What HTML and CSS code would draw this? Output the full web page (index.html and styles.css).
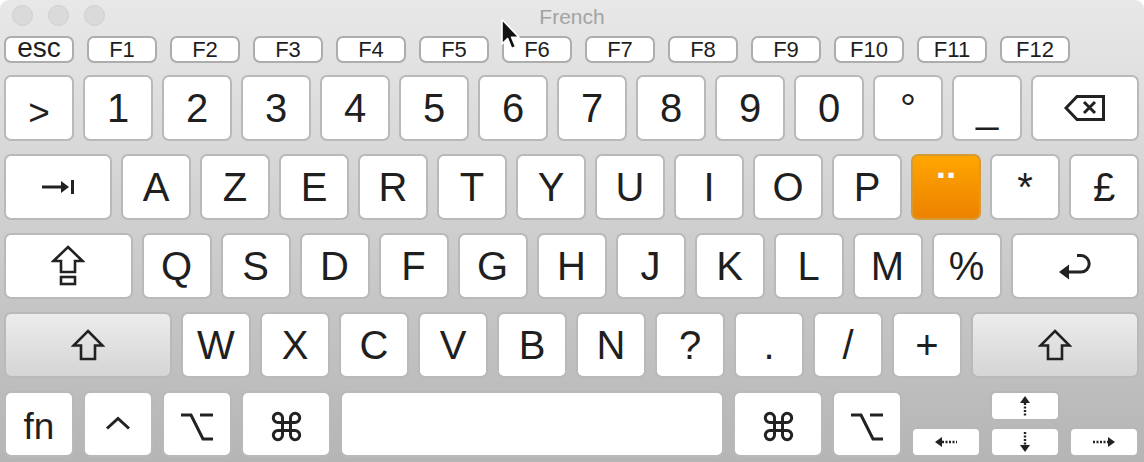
FILE: index.html
```html
<!DOCTYPE html>
<html>
<head>
<meta charset="utf-8">
<title>Keyboard Viewer</title>
<link rel="stylesheet" href="styles.css">
</head>
<body>
<div class="window">
  <div class="titlebar">
    <div class="lights"><span class="light"></span><span class="light"></span><span class="light"></span></div>
    <div class="title">French</div>
    <div></div>
  </div>

  <div class="fnrow">
    <div class="fkey esc">esc</div>
    <div class="fkey">F1</div><div class="fkey">F2</div><div class="fkey">F3</div><div class="fkey">F4</div>
    <div class="fkey">F5</div><div class="fkey">F6</div><div class="fkey">F7</div><div class="fkey">F8</div>
    <div class="fkey">F9</div><div class="fkey">F10</div><div class="fkey">F11</div><div class="fkey">F12</div>
  </div>

  <div class="rows">
    <div class="row">
      <div class="key low">&gt;</div>
      <div class="key">1</div><div class="key">2</div><div class="key">3</div><div class="key">4</div>
      <div class="key">5</div><div class="key">6</div><div class="key">7</div><div class="key">8</div>
      <div class="key">9</div><div class="key">0</div><div class="key">°</div><div class="key">_</div>
      <div class="key grow">
        <svg class="ico" width="42" height="28" viewBox="0 0 42 28"><path d="M2 14 L13 2.5 H39.5 V25.5 H13 Z" fill="none" stroke="#222" stroke-width="3" stroke-linejoin="miter"/><path d="M20 8 L31 19 M31 8 L20 19" stroke="#222" stroke-width="3"/></svg>
      </div>
    </div>

    <div class="row">
      <div class="key grow">
        <svg class="ico" width="34" height="18" viewBox="0 0 34 18"><path d="M1 9 H22" stroke="#222" stroke-width="3"/><path d="M20 3 L28 9 L20 15 Z" fill="#222"/><path d="M31.5 2 V16" stroke="#222" stroke-width="3"/></svg>
      </div>
      <div class="key">A</div><div class="key">Z</div><div class="key">E</div><div class="key">R</div>
      <div class="key">T</div><div class="key">Y</div><div class="key">U</div><div class="key">I</div>
      <div class="key">O</div><div class="key">P</div>
      <div class="key orange">¨</div>
      <div class="key">*</div><div class="key">£</div>
    </div>

    <div class="row">
      <div class="key grow">
        <svg class="ico" width="34" height="42" viewBox="0 0 34 42"><path d="M17 2 L31.5 16 H24 V27 H10 V16 H2.5 Z" fill="none" stroke="#222" stroke-width="2.6" stroke-linejoin="miter"/><rect x="10" y="32" width="14" height="7" fill="none" stroke="#222" stroke-width="2.6"/></svg>
      </div>
      <div class="key">Q</div><div class="key">S</div><div class="key">D</div><div class="key">F</div>
      <div class="key">G</div><div class="key">H</div><div class="key">J</div><div class="key">K</div>
      <div class="key">L</div><div class="key">M</div><div class="key">%</div>
      <div class="key grow">
        <svg class="ico" width="34" height="28" viewBox="0 0 34 28"><path d="M9 20 H23 A8.2 8.2 0 0 0 23 3.6 H19" fill="none" stroke="#222" stroke-width="3"/><path d="M1 20 L11 12.5 V27.5 Z" fill="#222"/></svg>
      </div>
    </div>

    <div class="row">
      <div class="key grow shift">
        <svg class="ico" width="34" height="32" viewBox="0 0 34 32"><path d="M17 2 L31.5 16.5 H24 V30 H10 V16.5 H2.5 Z" fill="none" stroke="#222" stroke-width="2.6" stroke-linejoin="miter"/></svg>
      </div>
      <div class="key">W</div><div class="key">X</div><div class="key">C</div><div class="key">V</div>
      <div class="key">B</div><div class="key">N</div><div class="key">?</div><div class="key">.</div>
      <div class="key">/</div><div class="key">+</div>
      <div class="key grow shift">
        <svg class="ico" width="34" height="32" viewBox="0 0 34 32"><path d="M17 2 L31.5 16.5 H24 V30 H10 V16.5 H2.5 Z" fill="none" stroke="#222" stroke-width="2.6" stroke-linejoin="miter"/></svg>
      </div>
    </div>

    <div class="row bottom">
      <div class="key fn">fn</div>
      <div class="key">
        <svg class="ico lowicon" width="26" height="14" viewBox="0 0 26 14"><path d="M2 12.5 L13 2.5 L24 12.5" fill="none" stroke="#222" stroke-width="3"/></svg>
      </div>
      <div class="key">
        <svg class="ico" width="34" height="30" viewBox="0 0 34 30"><path d="M1 3 H11 L23 27 H33 M20 3 H33" fill="none" stroke="#222" stroke-width="3"/></svg>
      </div>
      <div class="key cmd">
        <svg class="ico" width="33" height="33" viewBox="0 0 33 33"><path d="M12.5 12.5 V8 A4.6 4.6 0 1 0 8 12.5 H25 A4.6 4.6 0 1 0 20.5 8 V25 A4.6 4.6 0 1 0 25 20.5 H8 A4.6 4.6 0 1 0 12.5 25 Z" fill="none" stroke="#222" stroke-width="3"/></svg>
      </div>
      <div class="key space"></div>
      <div class="key cmd">
        <svg class="ico" width="33" height="33" viewBox="0 0 33 33"><path d="M12.5 12.5 V8 A4.6 4.6 0 1 0 8 12.5 H25 A4.6 4.6 0 1 0 20.5 8 V25 A4.6 4.6 0 1 0 25 20.5 H8 A4.6 4.6 0 1 0 12.5 25 Z" fill="none" stroke="#222" stroke-width="3"/></svg>
      </div>
      <div class="key">
        <svg class="ico" width="34" height="30" viewBox="0 0 34 30"><path d="M1 3 H11 L23 27 H33 M20 3 H33" fill="none" stroke="#222" stroke-width="3"/></svg>
      </div>
      <div class="arrows">
        <div class="akey up">
          <svg width="10" height="20" viewBox="0 0 10 20"><path d="M5 0 L10 7 H0 Z" fill="#222"/><path d="M5 7 V20" stroke="#222" stroke-width="2.4" stroke-dasharray="2 1.5"/></svg>
        </div>
        <div class="akey left">
          <svg width="22" height="10" viewBox="0 0 22 10"><path d="M0 5 L7 0 V10 Z" fill="#222"/><path d="M7 5 H22" stroke="#222" stroke-width="2.4" stroke-dasharray="2 1.5"/></svg>
        </div>
        <div class="akey down">
          <svg width="10" height="20" viewBox="0 0 10 20"><path d="M5 20 L10 13 H0 Z" fill="#222"/><path d="M5 0 V13" stroke="#222" stroke-width="2.4" stroke-dasharray="2 1.5"/></svg>
        </div>
        <div class="akey right">
          <svg width="22" height="10" viewBox="0 0 22 10"><path d="M22 5 L15 0 V10 Z" fill="#222"/><path d="M0 5 H15" stroke="#222" stroke-width="2.4" stroke-dasharray="2 1.5"/></svg>
        </div>
      </div>
    </div>
  </div>

  <svg class="cursor" width="22" height="34" viewBox="0 0 22 34"><path d="M2 1.5 V26 L7.6 20.6 L11.6 30.5 L15.6 28.8 L11.6 19.2 H19 Z" fill="#111" stroke="#fff" stroke-width="1.6" stroke-linejoin="round"/></svg>
</div>
</body>
</html>
```

FILE: styles.css
```css
* { box-sizing: border-box; }

html, body {
  margin: 0;
  padding: 0;
  background: #ffffff;
}

body {
  width: 1144px;
  height: 462px;
  overflow: hidden;
  font-family: "Liberation Sans", Arial, sans-serif;
}

.window {
  position: relative;
  width: 1144px;
  height: 462px;
  background: linear-gradient(#e8e8e8 0px, #e3e3e3 50px, #d8d8d8 150px, #c6c6c6 300px, #b5b5b5 462px);
  border-top-right-radius: 9px;
  border-top-left-radius: 9px;
  display: flex;
  flex-direction: column;
}

.titlebar {
  height: 36px;
  display: grid;
  grid-template-columns: 1fr auto 1fr;
  align-items: start;
}

.lights {
  display: flex;
  gap: 15px;
  padding: 5px 0 0 12px;
}

.light {
  width: 21px;
  height: 21px;
  border-radius: 50%;
  background: #dadada;
  border: 1px solid #cfcfcf;
}

.title {
  font-size: 21px;
  line-height: 21px;
  color: #a3a3a3;
  padding-top: 6px;
}

.fnrow {
  display: flex;
  gap: 13px;
  padding-left: 4px;
  height: 27px;
}

.fkey {
  width: 70px;
  height: 27px;
  flex: none;
  border: 2px solid #adadad;
  border-radius: 7px;
  background: #ffffff;
  display: flex;
  align-items: center;
  justify-content: center;
  font-size: 22px;
  color: #1e1e1e;
}

.fkey.esc {
  font-size: 28px;
  padding-bottom: 3px;
}

.rows {
  display: flex;
  flex-direction: column;
  gap: 13px;
  padding: 0 5px 0 4px;
  margin-top: 12px;
}

.row {
  display: flex;
  gap: 9px;
  height: 66px;
}

.key {
  width: 70px;
  flex: none;
  border: 2px solid #b9b9b9;
  border-radius: 7px;
  background: #ffffff;
  display: flex;
  align-items: center;
  justify-content: center;
  font-size: 40px;
  color: #1f1f1f;
}

.row.bottom .key { padding-top: 5px; }

.key.low {
  padding-top: 10px;
  font-size: 37px;
}

.key.grow { flex: 1; width: auto; }

.key.shift {
  background: linear-gradient(#ececec, #d5d5d5);
}

.key.orange {
  background: linear-gradient(#ffa600, #ed8200);
  border-color: #d69a33;
  color: #ffffff;
  font-size: 48px;
  font-weight: bold;
  padding-top: 4px;
}

.key.fn {
  font-size: 37px;
}

.key.cmd { width: 90px; }
.key.space { flex: 1; width: auto; }

.lowicon { margin-top: -8px; }

.arrows {
  width: 228px;
  flex: none;
  display: grid;
  grid-template-columns: repeat(3, 70px);
  grid-template-rows: 1fr 1fr;
  column-gap: 9px;
  row-gap: 6px;
}

.akey {
  background: #ffffff;
  border-radius: 6px;
  border: 2px solid #b7b7b7;
  display: flex;
  align-items: center;
  justify-content: center;
}

.akey.up { grid-column: 2; grid-row: 1; }
.akey.left { grid-column: 1; grid-row: 2; }
.akey.down { grid-column: 2; grid-row: 2; }
.akey.right { grid-column: 3; grid-row: 2; }

.cursor {
  position: absolute;
  left: 500px;
  top: 18px;
}
```
